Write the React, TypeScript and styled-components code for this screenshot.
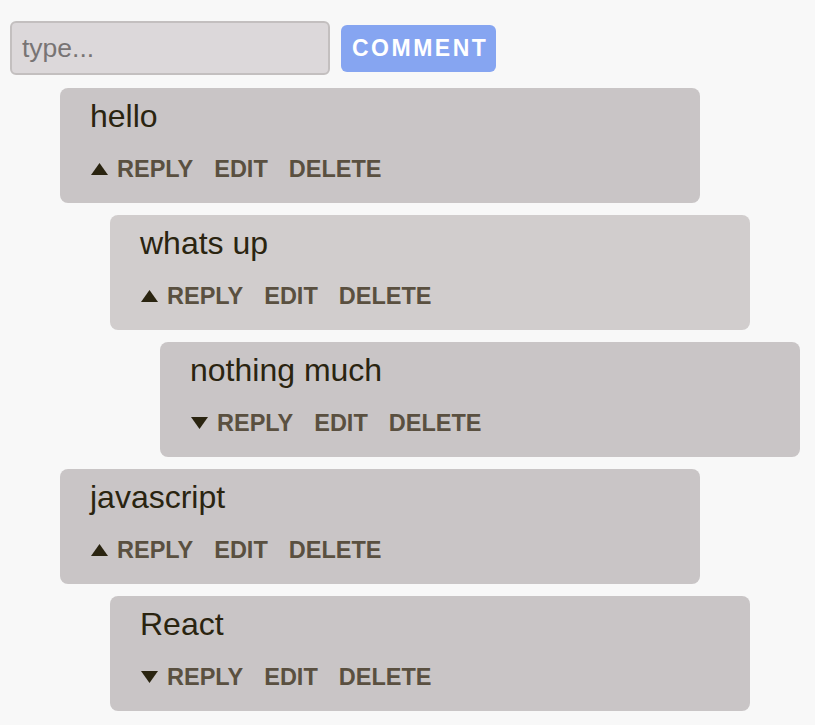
import { createGlobalStyle, styled } from 'styled-components';

type CommentNode = {
  id: number;
  text: string;
  open: boolean;
  light?: boolean;
  replies: CommentNode[];
};

const COMMENTS: CommentNode[] = [
  {
    id: 1,
    text: 'hello',
    open: true,
    replies: [
      {
        id: 2,
        text: 'whats up',
        open: true,
        light: true,
        replies: [{ id: 3, text: 'nothing much', open: false, replies: [] }],
      },
    ],
  },
  {
    id: 4,
    text: 'javascript',
    open: true,
    replies: [{ id: 5, text: 'React', open: false, replies: [] }],
  },
];

const Triangle = ({ up }: { up: boolean }) => (
  <svg width="17" height="12" viewBox="0 0 17 12">
    <path d={up ? 'M8.5 0 L17 12 L0 12 Z' : 'M0 0 L17 0 L8.5 12 Z'} fill="#2a2410" />
  </svg>
);

const Comment = ({ node }: { node: CommentNode }) => (
  <Thread>
    <Card $light={node.light}>
      <Body>{node.text}</Body>
      <Actions>
        <Action>
          <Triangle up={node.open} />
          REPLY
        </Action>
        <Action>EDIT</Action>
        <Action>DELETE</Action>
      </Actions>
    </Card>
    {node.replies.map((reply) => (
      <Comment key={reply.id} node={reply} />
    ))}
  </Thread>
);

const App = () => {
  return (
    <Page>
      <GlobalStyle />
      <Form>
        <Input placeholder="type..." />
        <SubmitButton>COMMENT</SubmitButton>
      </Form>
      <List>
        {COMMENTS.map((comment) => (
          <Comment key={comment.id} node={comment} />
        ))}
      </List>
    </Page>
  );
};

export default App;

const GlobalStyle = createGlobalStyle`
  body {
    margin: 0;
    background: #f8f8f8;
    font-family: 'Liberation Sans', Arial, sans-serif;
  }
`;

const Page = styled.div`
  padding: 21px 10px;
`;

const Form = styled.div`
  display: flex;
  align-items: center;
  gap: 11px;
`;

const Input = styled.input`
  box-sizing: border-box;
  width: 320px;
  height: 54px;
  padding: 0 10px;
  border: 2px solid #c3bfbf;
  border-radius: 6px;
  background: #dcd8da;
  font-family: 'Liberation Sans', Arial, sans-serif;
  font-size: 26.5px;
  color: #2a2410;
  outline: none;

  &::placeholder {
    color: #787474;
  }
`;

const SubmitButton = styled.button`
  box-sizing: border-box;
  height: 47px;
  padding: 0 8px 0 11px;
  border: none;
  border-radius: 6px;
  background: #86a5f1;
  color: #ffffff;
  font-family: 'Liberation Sans', Arial, sans-serif;
  font-size: 23px;
  font-weight: 700;
  letter-spacing: 2.5px;
  cursor: pointer;
`;

const List = styled.div`
  display: flex;
  flex-direction: column;
  gap: 12px;
  margin-top: 13px;
  padding-left: 50px;
`;

const Thread = styled.div`
  display: flex;
  flex-direction: column;
  gap: 12px;

  & > & {
    margin-left: 50px;
  }
`;

const Card = styled.div<{ $light?: boolean }>`
  box-sizing: border-box;
  width: 640px;
  height: 115px;
  padding: 10px 30px 0 31px;
  border-radius: 8px;
  background: ${({ $light }) => ($light ? '#d1cdcd' : '#c9c5c6')};
`;

const Body = styled.div`
  margin-left: -1px;
  font-size: 32px;
  color: #2a2410;
  line-height: 37px;
`;

const Actions = styled.div`
  display: flex;
  align-items: center;
  gap: 21px;
  margin-top: 21px;
`;

const Action = styled.span`
  display: flex;
  align-items: center;
  gap: 9px;
  font-size: 23.5px;
  font-weight: 700;
  color: #5a5040;
  line-height: 26px;
  cursor: pointer;
`;
